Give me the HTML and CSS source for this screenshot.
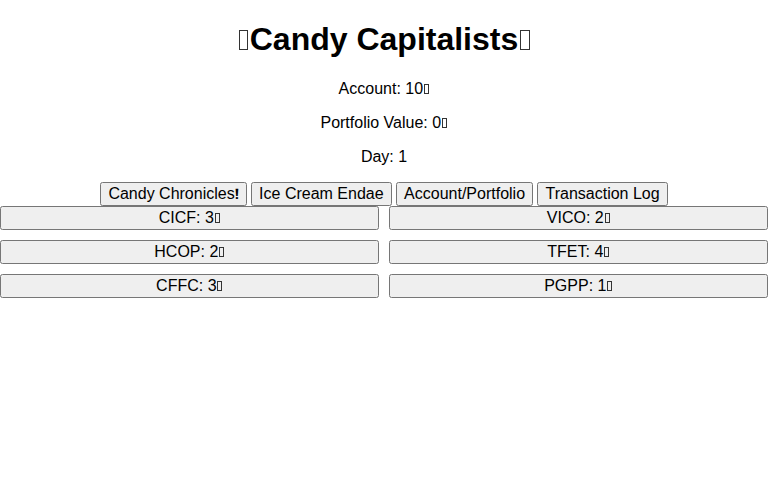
FILE: index.html
```html
<!DOCTYPE html>
<html>
<head>
<meta charset="utf-8">
<link rel="stylesheet" href="styles.css">
</head>
<body class="page">
<h1 class="title"><span class="tofu"></span>Candy Capitalists<span class="tofu"></span></h1>
<p class="stat">Account: 10<span class="tofu"></span></p>
<p class="stat">Portfolio Value: 0<span class="tofu"></span></p>
<p class="stat">Day: 1</p>
<nav class="tabs">
<button class="tab">Candy Chronicles<span class="bang">&#x2757;&#xFE0E;</span></button>
<button class="tab">Ice Cream Endae</button>
<button class="tab">Account/Portfolio</button>
<button class="tab">Transaction Log</button>
</nav>
<div class="stocks">
<button class="stock">CICF: 3<span class="tofu"></span></button>
<button class="stock">VICO: 2<span class="tofu"></span></button>
<button class="stock">HCOP: 2<span class="tofu"></span></button>
<button class="stock">TFET: 4<span class="tofu"></span></button>
<button class="stock">CFFC: 3<span class="tofu"></span></button>
<button class="stock">PGPP: 1<span class="tofu"></span></button>
</div>
</body>
</html>
```
FILE: styles.css
```css
.page {
  margin: 0;
  font-family: "Liberation Sans", Arial, sans-serif;
  text-align: center;
  color: #000;
  background: #fff;
}
.title {
  font-size: 32px;
  font-weight: bold;
  margin: 21.44px 0;
}
.stat {
  font-size: 16px;
  margin: 16px 0;
}
.tofu {
  display: inline-block;
  box-sizing: border-box;
  width: 0.3em;
  height: 0.64em;
  border: 1px solid #333;
  margin: 0 0.04em 0 0.06em;
  vertical-align: baseline;
}
.tabs {
  text-align: center;
}
.tab, .stock {
  font-family: "Liberation Sans", Arial, sans-serif;
  font-size: 16px;
  color: #000;
}
.bang {
  font-family: "DejaVu Sans", sans-serif;
  font-size: 14px;
}
.stocks {
  display: grid;
  grid-template-columns: 1fr 1fr;
  column-gap: 10px;
  row-gap: 10px;
}
```
